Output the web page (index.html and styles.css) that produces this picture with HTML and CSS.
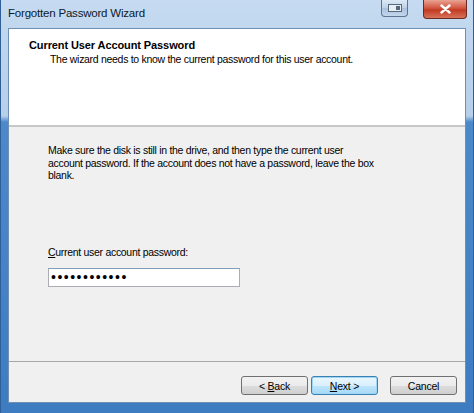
FILE: index.html
```html
<!DOCTYPE html>
<html lang="en">
<head>
  <meta charset="UTF-8" />
  <title>Forgotten Password Wizard</title>
  <link rel="stylesheet" href="styles.css">
</head>
<body>
  <div class="window">
    <div class="titlebar">
      <span class="title">Forgotten Password Wizard</span>
      <div class="controls">
        <button class="ctl ctl-min" aria-label="Switch">
          <svg width="14" height="8" viewBox="0 0 14 8">
            <rect x="0.5" y="0.5" width="13" height="7" fill="#e9eef4" stroke="#56687c"/>
            <rect x="8" y="2" width="4" height="4" fill="#56687c"/>
          </svg>
        </button>
        <button class="ctl ctl-close" aria-label="Close">
          <svg width="11" height="10" viewBox="0 0 11 10">
            <path d="M1.5 1.5 L9.5 8.5 M9.5 1.5 L1.5 8.5" stroke="#fff" stroke-width="2.4" stroke-linecap="round"/>
          </svg>
        </button>
      </div>
    </div>

    <div class="client">
      <div class="header">
        <h1>Current User Account Password</h1>
        <p>The wizard needs to know the current password for this user account.</p>
      </div>

      <div class="body">
        <p class="intro">Make sure the disk is still in the drive, and then type the current user<br>account password. If the account does not have a password, leave the box blank.</p>
        <label for="pwd"><u>C</u>urrent user account password:</label>
        <input type="password" id="pwd" value="secretpass12" />
      </div>

      <div class="footer">
        <button class="btn"><span>&lt; <u>B</u>ack</span></button>
        <button class="btn btn-default"><span><u>N</u>ext &gt;</span></button>
        <button class="btn btn-cancel">Cancel</button>
      </div>
    </div>
  </div>
</body>
</html>
```

FILE: styles.css
```css
* {
  box-sizing: border-box;
}
body {
  margin: 0;
  font-family: 'Liberation Sans', Arial, sans-serif;
  font-size: 10.5px;
  letter-spacing: -0.3px;
  color: #000;
  background: #fff;
}
.window {
  width: 474px;
  height: 413px;
  padding: 0 7px 10px 7px;
  display: flex;
  flex-direction: column;
  background: linear-gradient(to bottom, #c6dbf1 0, #bcd3ec 60px, #b7cfe9 116px, #4c89cb 122px, #3e7cc1 100%);
  border-left: 1px solid #2e5f96;
  border-right: 1px solid #2e5f96;
}
.titlebar {
  height: 28px;
  display: flex;
  justify-content: space-between;
  align-items: flex-start;
}
.title {
  padding: 7px 0 0 0;
  font-size: 11.5px;
  letter-spacing: -0.2px;
  color: #0b1a2a;
}
.controls {
  display: flex;
  gap: 15px;
  margin-right: -1px;
}
.ctl {
  border: 1px solid #5c7594;
  border-top: none;
  border-radius: 0 0 4px 4px;
  padding: 0;
  display: flex;
  align-items: center;
  justify-content: center;
  cursor: pointer;
}
.ctl-min {
  width: 27px;
  height: 17px;
  background: linear-gradient(to bottom, #dce8f5, #bdd1e8 50%, #a9c1de 51%, #c4d7ec);
}
.ctl-close {
  width: 44px;
  height: 19px;
  border-color: #6d2a22;
  background: linear-gradient(to bottom, #e8a393, #d2553e 45%, #c23a22 55%, #d8725a);
}
.client {
  flex: 1;
  display: flex;
  flex-direction: column;
  background: #f0f0f0;
  border: 1px solid #6f8fb4;
}
.header {
  height: 98px;
  background: #fff;
  border-bottom: 2px solid #c7c7c7;
  padding: 9px 0 0 20px;
}
.header h1 {
  margin: 0;
  font-size: 11px;
  letter-spacing: -0.1px;
  font-weight: bold;
  line-height: 14px;
}
.header p {
  margin: 0;
  padding-left: 21px;
  line-height: 14px;
}
.body {
  flex: 1;
  padding: 17px 0 0 39px;
  display: flex;
  flex-direction: column;
  align-items: flex-start;
}
.intro {
  margin: 0;
  width: 348px;
  line-height: 12.5px;
}
label {
  margin-top: 64px;
}
u {
  text-decoration-thickness: 1px;
  text-underline-offset: 1px;
}
input {
  margin-top: 10px;
  width: 192px;
  height: 19px;
  border: 1px solid #abadb3;
  border-top-color: #7f9db9;
  background: #fff;
  font-family: 'Liberation Sans', Arial, sans-serif;
  font-size: 14px;
  letter-spacing: 1.5px;
  padding: 0 2px;
  outline: none;
}
.footer {
  height: 41px;
  border-top: 1px solid #a8a8a8;
  display: flex;
  justify-content: flex-end;
  align-items: flex-start;
  padding: 14px 8px 0 0;
}
.btn {
  width: 67px;
  height: 19px;
  margin-left: 3px;
  border: 1px solid #707070;
  border-radius: 3px;
  background: linear-gradient(to bottom, #f2f2f2 0, #ebebeb 50%, #dddddd 51%, #cfcfcf 100%);
  font-family: 'Liberation Sans', Arial, sans-serif;
  font-size: 10.5px;
  letter-spacing: -0.2px;
  color: #000;
  padding: 0;
  cursor: pointer;
}
.btn-default {
  border-color: #3c7fb1;
  background: linear-gradient(to bottom, #eaf6fd 0, #d9f0fc 50%, #bee6fd 51%, #a7d9f5 100%);
  box-shadow: inset 0 0 0 1px #9ed7f5;
}
.btn-cancel {
  margin-left: 12px;
}
```
